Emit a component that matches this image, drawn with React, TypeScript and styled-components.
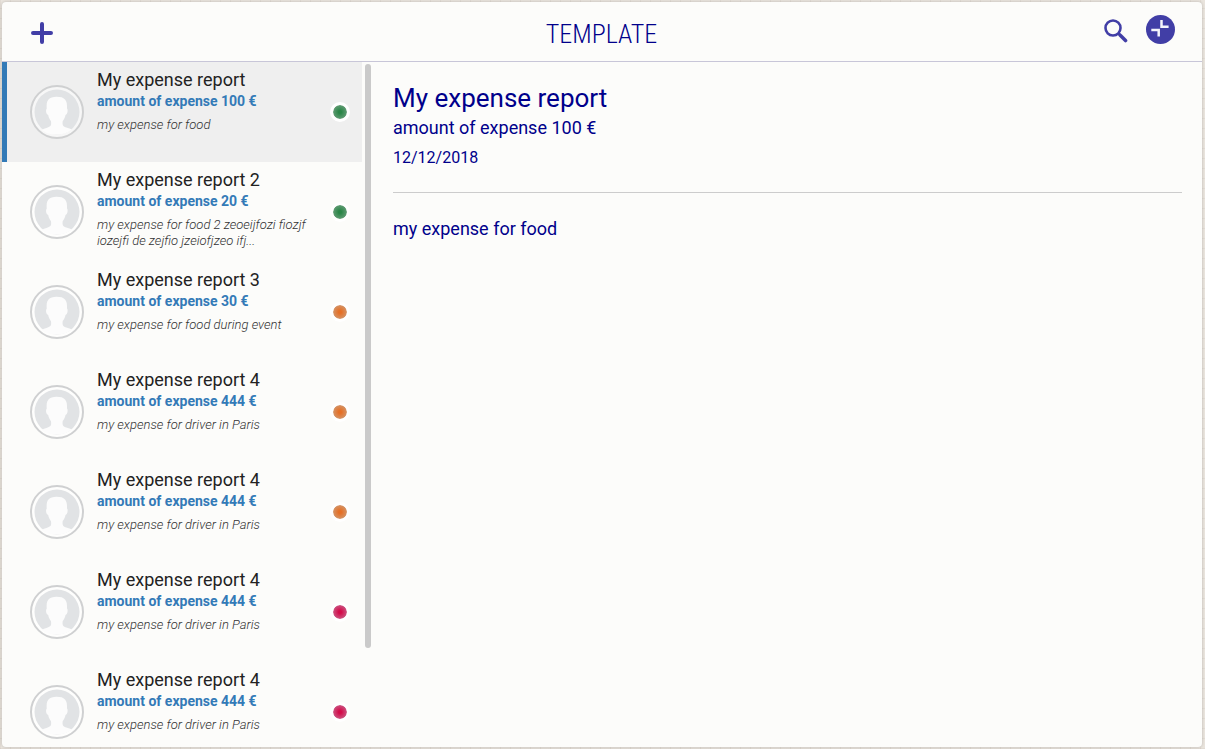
import React, { useState } from 'react';
import styled, { createGlobalStyle } from 'styled-components';

const GlobalStyle = createGlobalStyle`
  *, *::before, *::after { box-sizing: border-box; }
  body {
    margin: 0;
    font-family: Roboto, "Liberation Sans", sans-serif;
    background-color: #e9e4dd;
    background-image:
      repeating-linear-gradient(0deg, rgba(120, 100, 80, 0.07) 0 1px, transparent 1px 10px),
      repeating-linear-gradient(90deg, rgba(120, 100, 80, 0.07) 0 1px, transparent 1px 10px);
  }
  h1, h2, p, ul { margin: 0; padding: 0; font-weight: 400; }
`;

const Page = styled.div`
  height: 100vh;
  padding: 2px 3px 2px 2px;
`;

const Panel = styled.div`
  display: flex;
  flex-direction: column;
  height: 100%;
  overflow: hidden;
  border-radius: 4px;
  background: #fcfcfa;
  box-shadow: 0 0 3px rgba(0, 0, 0, 0.2);
`;

const Header = styled.header`
  display: grid;
  grid-template-columns: 1fr auto 1fr;
  align-items: center;
  flex: none;
  height: 60px;
  padding: 0 27px 0 26px;
  border-bottom: 1px solid #c8c6d8;
`;

const PageTitle = styled.h1`
  padding-top: 4px;
  font-family: "Roboto Condensed", Roboto, sans-serif;
  font-size: 26px;
  font-weight: 300;
  line-height: 32px;
  color: #00008b;
`;

const Actions = styled.div<{ $end?: boolean }>`
  display: flex;
  align-items: center;
  gap: 18px;
  padding-bottom: ${({ $end }) => ($end ? '4px' : '0')};
  justify-content: ${({ $end }) => ($end ? 'flex-end' : 'flex-start')};
`;

const IconButton = styled.button`
  display: flex;
  padding: 0;
  border: 0;
  background: none;
  color: #413ea6;
  cursor: pointer;
`;

const Content = styled.div`
  display: flex;
  flex: 1;
  min-height: 0;
`;

const Reports = styled.ul`
  flex: 0 0 30%;
  overflow: hidden;
  list-style: none;
`;

const Row = styled.button<{ $selected: boolean }>`
  display: flex;
  align-items: center;
  width: 100%;
  height: 100px;
  padding: 0 12px 0 23px;
  border: 0;
  border-left: 5px solid ${({ $selected }) => ($selected ? '#337ab7' : 'transparent')};
  background: ${({ $selected }) => ($selected ? '#efefef' : 'transparent')};
  font-family: inherit;
  text-align: left;
  cursor: pointer;
`;

const Avatar = styled.svg`
  flex: none;
  width: 54px;
  height: 54px;
`;

const Summary = styled.span`
  display: flex;
  flex-direction: column;
  flex: 1;
  align-self: flex-start;
  min-width: 0;
  padding: 8px 20px 0 13px;
`;

const RowTitle = styled.span`
  font-size: 18px;
  line-height: 20px;
  color: #222;
`;

const RowAmount = styled.span`
  font-size: 14px;
  font-weight: 700;
  line-height: 22px;
  color: #337ab7;
`;

const RowNote = styled.span`
  margin-top: 5px;
  font-size: 13px;
  font-style: italic;
  font-weight: 300;
  line-height: 16px;
  color: #333;
`;

const Status = styled.span<{ $color: string; $edge: string }>`
  flex: none;
  width: 20px;
  height: 20px;
  border: 3px solid #fff;
  border-radius: 50%;
  background: radial-gradient(circle, ${({ $color }) => $color} 15%, ${({ $edge }) => $edge} 80%) padding-box;
`;

const Rail = styled.div`
  flex: none;
  width: 11px;
  padding: 2px 2px 0 3px;
`;

const Thumb = styled.div`
  height: 85.5%;
  border-radius: 3px;
  background: #cacaca;
`;

const Detail = styled.main`
  flex: 1;
  min-width: 0;
  padding: 20px;
  color: #00008b;
`;

const DetailHead = styled.header`
  padding-bottom: 18px;
  border-bottom: 1px solid #ccc;
`;

const DetailTitle = styled.h2`
  font-size: 26px;
  line-height: 32px;
`;

const DetailAmount = styled.p`
  font-size: 18px;
  line-height: 28px;
`;

const DetailDate = styled.p`
  font-size: 16px;
  line-height: 32px;
`;

const DetailNote = styled.p`
  padding-top: 24px;
  font-size: 18px;
  line-height: 24px;
`;

const statuses = {
  approved: ['#2b8648', '#6a9f7b'],
  pending: ['#e57027', '#d09a72'],
  refused: ['#d30d4b', '#c9608a'],
} as const;

type Report = { title: string; amount: number; note: string; status: keyof typeof statuses };

const driver = { title: 'My expense report 4', amount: 444, note: 'my expense for driver in Paris' };

const reports: Report[] = [
  { title: 'My expense report', amount: 100, note: 'my expense for food', status: 'approved' },
  { title: 'My expense report 2', amount: 20, note: 'my expense for food 2 zeoeijfozi fiozjf iozejfi de zejfio jzeiofjzeo ifj...', status: 'approved' },
  { title: 'My expense report 3', amount: 30, note: 'my expense for food during event', status: 'pending' },
  { ...driver, status: 'pending' },
  { ...driver, status: 'pending' },
  { ...driver, status: 'refused' },
  { ...driver, status: 'refused' },
];

function Person() {
  return (
    <Avatar viewBox="0 0 54 54" aria-hidden="true">
      <circle cx="27" cy="27" r="26" fill="#fff" fillOpacity="0.5" stroke="#cfd0d1" strokeWidth="2" />
      <circle cx="27" cy="27" r="22.5" fill="#e1e3e5" />
      <path
        d="M26.500 11.800c-3.500 0-6.300.8-8 2.700-1.900 2.200-2 5-1.800 9.200-.9.600-.8 3.500 0 5 .4.800 1 1.100 1.500 1.300.5 2.800 1.700 4.700 2.800 6.200.3 2.600.2 4-.6 4.900-1.500 1.500-6 2.400-8.600 3.800A22.500 22.500 0 0 0 27 49.500a22.500 22.500 0 0 0 14.700-5c-2.600-1.300-7-2-8.400-3.500-.8-.9-.9-2.300-.6-4.900 1.100-1.500 2.300-3.400 2.800-6.200.5-.2 1.100-.5 1.500-1.300.8-1.500.9-4.400 0-5 .2-4.200-.2-7-2-9.200-1.800-1.900-4.500-2.600-8.500-2.600z"
        fill="#fcfcfc"
      />
    </Avatar>
  );
}

export default function App() {
  const [selected, setSelected] = useState(0);
  const current = reports[selected];

  return (
    <>
      <GlobalStyle />
      <Page>
        <Panel>
          <Header>
            <Actions>
              <IconButton aria-label="Add report">
                <svg width="26" height="26" viewBox="0 0 26 26" fill="none" stroke="currentColor" strokeWidth="4" strokeLinecap="round">
                  <path d="M14 5v18M5 14h18" />
                </svg>
              </IconButton>
            </Actions>
            <PageTitle>TEMPLATE</PageTitle>
            <Actions $end>
              <IconButton aria-label="Search">
                <svg width="26" height="26" viewBox="0 0 26 26" fill="none" stroke="currentColor">
                  <circle cx="11" cy="11" r="7.500" strokeWidth="2.600" />
                  <path d="M16.500 16.500l1.500 1.500" strokeWidth="3" />
                  <path d="M18.500 18.500l5 5" strokeWidth="3.600" strokeLinecap="round" />
                </svg>
              </IconButton>
              <IconButton aria-label="Collapse">
                <svg width="29" height="29" viewBox="0 0 29 29">
                  <circle cx="14.500" cy="14.500" r="14.500" fill="currentColor" />
                  <path d="M15.500 5v6.700H22.600M5.300 15H12.700v6.400" fill="none" stroke="#f4f4fb" strokeWidth="2.500" />
                </svg>
              </IconButton>
            </Actions>
          </Header>
          <Content>
            <Reports>
              {reports.map((report, index) => (
                <li key={index}>
                  <Row $selected={index === selected} onClick={() => setSelected(index)}>
                    <Person />
                    <Summary>
                      <RowTitle>{report.title}</RowTitle>
                      <RowAmount>amount of expense {report.amount} €</RowAmount>
                      <RowNote>{report.note}</RowNote>
                    </Summary>
                    <Status $color={statuses[report.status][0]} $edge={statuses[report.status][1]} />
                  </Row>
                </li>
              ))}
            </Reports>
            <Rail>
              <Thumb />
            </Rail>
            <Detail>
              <DetailHead>
                <DetailTitle>{current.title}</DetailTitle>
                <DetailAmount>amount of expense {current.amount} €</DetailAmount>
                <DetailDate>12/12/2018</DetailDate>
              </DetailHead>
              <DetailNote>{current.note}</DetailNote>
            </Detail>
          </Content>
        </Panel>
      </Page>
    </>
  );
}
